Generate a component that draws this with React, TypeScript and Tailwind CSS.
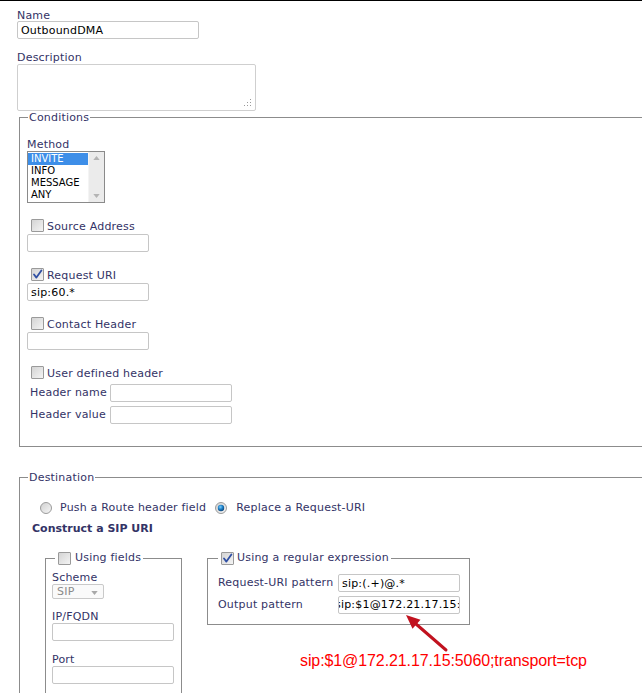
import React from 'react';

const LABEL = 'text-[#333366]';

function Checkbox({ checked = false }: { checked?: boolean }) {
  return (
    <span className="relative inline-block h-[13px] w-[13px] shrink-0 rounded-[1px] border border-[#9a9a9a] bg-gradient-to-br from-[#d4d4d4] to-[#f4f4f4]">
      {checked && (
        <svg viewBox="0 0 13 13" className="absolute -left-px -top-px h-[13px] w-[13px]">
          <path d="M3 6.5 L5.4 9.6 L10.4 2.4" fill="none" stroke="#2f4fa3" strokeWidth="1.8" strokeLinecap="round" strokeLinejoin="round" />
        </svg>
      )}
    </span>
  );
}

function Radio({ checked = false }: { checked?: boolean }) {
  return (
    <svg viewBox="0 0 12 12" className="h-[12px] w-[12px] shrink-0">
      <defs>
        <linearGradient id={checked ? 'rgc' : 'rgu'} x1="0" y1="0" x2="1" y2="1">
          <stop offset="0" stopColor="#cfcfcf" />
          <stop offset="1" stopColor="#f7f7f7" />
        </linearGradient>
        <radialGradient id="rdot" cx="0.4" cy="0.35" r="0.7">
          <stop offset="0" stopColor="#7fd0ff" />
          <stop offset="0.5" stopColor="#1d7fc6" />
          <stop offset="1" stopColor="#0b3f72" />
        </radialGradient>
      </defs>
      <circle cx="6" cy="6" r="5.5" fill={`url(#${checked ? 'rgc' : 'rgu'})`} stroke="#9b9b9b" strokeWidth="1" />
      {checked && <circle cx="6" cy="6" r="3.2" fill="url(#rdot)" />}
    </svg>
  );
}

function TextBox({ value = '', width = 'w-[122px]' }: { value?: string; width?: string }) {
  return (
    <input
      readOnly
      defaultValue={value}
      className={`${width} block h-[18px] rounded-[2px] border border-[#c6c6c6] bg-white pl-[3px] text-[11px] leading-[16px] tracking-[0.2px] text-black outline-none`}
    />
  );
}

function CheckGroup({ label, value, checked }: { label: string; value?: string; checked?: boolean }) {
  return (
    <div className="mt-[16px]">
      <div className="flex h-[15px] items-start pl-[4px]">
        <Checkbox checked={checked} />
        <span className={`ml-[3px] mt-[2px] leading-[12px] ${LABEL}`}>{label}</span>
      </div>
      <TextBox value={value} />
    </div>
  );
}

export default function App() {
  const methods = ['INVITE', 'INFO', 'MESSAGE', 'ANY'];

  return (
    <div className="relative h-[693px] overflow-hidden border-t border-black bg-white font-['DejaVu_Sans',sans-serif] text-[11px] tracking-[0.2px]">
      <div className="pl-[17px] pt-[9px]">
        <div className={`leading-[11px] ${LABEL}`}>Name</div>
        <TextBox value="OutboundDMA" width="w-[182px]" />

        <div className={`mt-[13px] leading-[12px] ${LABEL}`}>Description</div>
        <div className="relative h-[47px] w-[239px]">
          <textarea readOnly className="block h-[47px] w-[239px] resize-none rounded-[2px] border border-[#cfcfcf] bg-white outline-none" />
          <svg viewBox="0 0 8 8" className="absolute bottom-[4px] right-[4px] h-[8px] w-[8px]">
            <rect x="6" y="0" width="1" height="1" fill="#9a9a9a" />
            <rect x="3" y="3" width="1" height="1" fill="#9a9a9a" />
            <rect x="6" y="3" width="1" height="1" fill="#9a9a9a" />
            <rect x="0" y="6" width="1" height="1" fill="#9a9a9a" />
            <rect x="3" y="6" width="1" height="1" fill="#9a9a9a" />
            <rect x="6" y="6" width="1" height="1" fill="#9a9a9a" />
          </svg>
        </div>

        {/* Conditions */}
        <fieldset className="ml-[2px] w-[660px] border border-[#8c8c8c] pb-[22px] pt-[15px]">
          <legend className={`ml-[8px] px-[1px] leading-[13px] ${LABEL}`}>Conditions</legend>
          <div className="pl-[7px]">
            <div className={`leading-[12px] ${LABEL}`}>Method</div>
            <div className="flex h-[52px] w-[78px] border border-[#8a8a8a] bg-white">
              <div className="flex-1 py-px text-[10px] tracking-normal text-black">
                {methods.map((m, i) => (
                  <div key={m} className={`h-[12px] pl-[3px] leading-[12px] ${i === 0 ? 'bg-[#3d8ee8] text-white' : ''}`}>
                    {m}
                  </div>
                ))}
              </div>
              <div className="flex w-[16px] flex-col items-center justify-between border-l border-[#f4f4f4] bg-[#ebebeb] py-[4px]">
                <svg viewBox="0 0 8 5" className="h-[4px] w-[7px]"><path d="M0 5 L4 0 L8 5 Z" fill="#b4b4b4" /></svg>
                <svg viewBox="0 0 8 5" className="h-[4px] w-[7px]"><path d="M0 0 L4 5 L8 0 Z" fill="#b4b4b4" /></svg>
              </div>
            </div>

            <CheckGroup label="Source Address" />
            <CheckGroup label="Request URI" value="sip:60.*" checked />
            <CheckGroup label="Contact Header" />

            <div className="mt-[16px]">
              <div className="flex h-[15px] items-start pl-[4px]">
                <Checkbox />
                <span className={`ml-[3px] mt-[2px] leading-[12px] ${LABEL}`}>User defined header</span>
              </div>
              <div className="mt-[3px] flex items-center">
                <span className={`w-[83px] pl-[3px] leading-[12px] ${LABEL}`}>Header name</span>
                <TextBox />
              </div>
              <div className="mt-[4px] flex items-center">
                <span className={`w-[83px] pl-[3px] leading-[12px] ${LABEL}`}>Header value</span>
                <TextBox />
              </div>
            </div>
          </div>
        </fieldset>

        {/* Destination */}
        <fieldset className="ml-[2px] mt-[24px] w-[660px] border border-[#8c8c8c] pb-[40px] pt-[17px]">
          <legend className={`ml-[8px] px-[1px] leading-[13px] ${LABEL}`}>Destination</legend>

          <div className={`flex h-[14px] items-center pl-[20px] leading-[12px] ${LABEL}`}>
            <Radio />
            <span className="ml-[8px]">Push a Route header field</span>
            <span className="ml-[9px]"><Radio checked /></span>
            <span className="ml-[9px]">Replace a Request-URI</span>
          </div>

          <div className={`mt-[8px] pl-[12px] font-bold leading-[12px] tracking-normal ${LABEL}`}>Construct a SIP URI</div>

          <div className="mt-[16px] flex items-start pl-[25px]">
            {/* Using fields */}
            <fieldset className="w-[137px] border border-[#8c8c8c] pb-[30px] pl-[6px] pt-[7px]">
              <legend className="ml-[3px] pl-[3px] pr-[2px]">
                <span className="flex h-[14px] items-center">
                  <Checkbox />
                  <span className={`ml-[4px] leading-[12px] ${LABEL}`}>Using fields</span>
                </span>
              </legend>
              <div className={`leading-[12px] ${LABEL}`}>Scheme</div>
              <div className="flex h-[15px] w-[52px] items-center justify-between rounded-[2px] border border-[#c9c9c9] bg-[#fafafa] pl-[4px] pr-[5px]">
                <span className="leading-[12px] text-[#8a8a8a]">SIP</span>
                <svg viewBox="0 0 8 5" className="mt-[3px] h-[4px] w-[7px]"><path d="M0 0 L4 5 L8 0 Z" fill="#a8a8a8" /></svg>
              </div>

              <div className={`mt-[12px] leading-[12px] ${LABEL}`}>IP/FQDN</div>
              <TextBox />

              <div className={`mt-[13px] leading-[12px] ${LABEL}`}>Port</div>
              <TextBox />
            </fieldset>

            {/* Using a regular expression */}
            <div className="ml-[25px]">
              <fieldset className="w-[263px] border border-[#8c8c8c] pb-[10px] pl-[10px] pt-[9px]">
                <legend className="pl-[3px] pr-[2px]">
                  <span className="flex h-[14px] items-center">
                    <Checkbox checked />
                    <span className={`ml-[3px] leading-[12px] ${LABEL}`}>Using a regular expression</span>
                  </span>
                </legend>
                <div className="flex items-center">
                  <span className={`w-[120px] leading-[12px] ${LABEL}`}>Request-URI pattern</span>
                  <TextBox value="sip:(.+)@.*" />
                </div>
                <div className="mt-[4px] flex items-center">
                  <span className={`w-[120px] leading-[12px] ${LABEL}`}>Output pattern</span>
                  <div className="h-[18px] w-[122px] overflow-hidden whitespace-nowrap rounded-[2px] border border-[#c6c6c6] bg-white leading-[16px] text-black">
                    <span className="ml-[-4px]">sip:$1@172.21.17.15:5060;transport=tcp</span>
                  </div>
                </div>
              </fieldset>

              <div className="ml-[93px] mt-[27px] whitespace-nowrap font-['Liberation_Sans',Arial,sans-serif] text-[16px] leading-[18px] tracking-[-0.1px] text-[#ff0000]">
                sip:$1@172.21.17.15:5060;transport=tcp
              </div>
            </div>
          </div>
        </fieldset>
      </div>

      {/* annotation arrow */}
      <svg className="absolute left-[400px] top-[608px] h-[46px] w-[52px]" viewBox="0 0 52 46">
        <line x1="16" y1="15" x2="46" y2="41" stroke="#c1121f" strokeWidth="3" strokeLinecap="round" />
        <path d="M6 6 L20.5 10.7 L12.5 19.7 Z" fill="#c1121f" />
      </svg>
    </div>
  );
}
